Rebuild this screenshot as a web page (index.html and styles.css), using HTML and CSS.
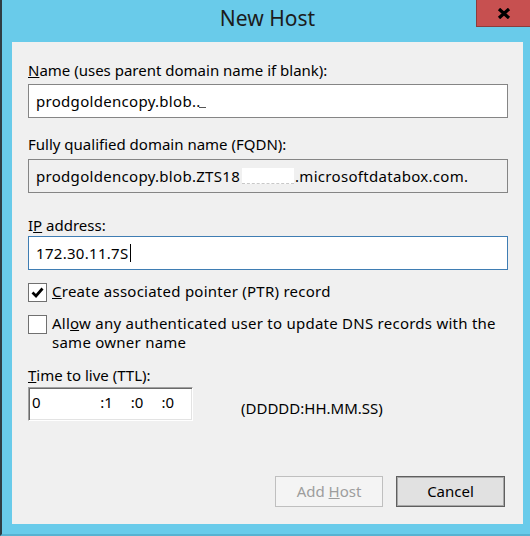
FILE: index.html
```html
<!DOCTYPE html>
<html lang="en">
<head>
    <meta charset="UTF-8">
    <title>New Host</title>
    <link rel="stylesheet" href="styles.css">
</head>
<body>

    <div class="window">
        <div class="titlebar">
            <span class="title">New Host</span>
            <div class="close">
                <svg width="14" height="11" viewBox="0 0 14 11">
                    <path d="M2 1 L12 10 M12 1 L2 10" stroke="#000" stroke-width="3.3" fill="none"/>
                </svg>
            </div>
        </div>

        <div class="client">
            <div class="caption"><u>N</u>ame (uses parent domain name if blank):</div>
            <div class="textbox"><span>prodgoldencopy.blob..</span><span class="mark"></span></div>

            <div class="caption group">Fully qualified domain name (FQDN):</div>
            <div class="textbox readonly"><span>prodgoldencopy.blob.ZTS18</span><span class="redacted"></span><span>.microsoftdatabox.com.</span></div>

            <div class="caption group ip">I<u>P</u> address:</div>
            <div class="textbox focused"><span>172.30.11.7S</span><span class="caret"></span></div>

            <div class="check-row first">
                <div class="checkbox">
                    <svg width="17" height="17" viewBox="0 0 17 17">
                        <path d="M3.5 8.5 L7 12 L13.5 4.5" stroke="#000" stroke-width="2.7" fill="none"/>
                    </svg>
                </div>
                <div class="check-text"><u>C</u>reate associated pointer (PTR) record</div>
            </div>

            <div class="check-row">
                <div class="checkbox"></div>
                <div class="check-text">All<u>o</u>w any authenticated user to update DNS records with the<br>same owner name</div>
            </div>

            <div class="caption ttl-caption"><u>T</u>ime to live (TTL):</div>
            <div class="ttl-row">
                <div class="ttl-box">
                    <span class="ttl-days">0</span>
                    <span class="ttl-part">:1</span>
                    <span class="ttl-part">:0</span>
                    <span class="ttl-part">:0</span>
                </div>
                <div class="ttl-format">(DDDDD:HH.MM.SS)</div>
            </div>

            <div class="buttons">
                <div class="button disabled"><span>Add <u>H</u>ost</span></div>
                <div class="button default"><span>Cancel</span></div>
            </div>
        </div>
    </div>

</body>
</html>
```

FILE: styles.css
```css
html, body {
    margin: 0;
    padding: 0;
}

body {
    width: 530px;
    height: 536px;
    overflow: hidden;
    font-family: "Noto Sans", "Open Sans", sans-serif;
    font-size: 15px;
    line-height: 19px;
    color: #000;
}

.window {
    box-sizing: border-box;
    height: 536px;
    background-color: #69cbea;
    border-left: 2px solid #2f3d44;
    border-bottom: 2px solid #58b2d1;
    padding: 0 7px 10px 10px;
    display: flex;
    flex-direction: column;
}

.titlebar {
    height: 42px;
    position: relative;
    display: flex;
    align-items: center;
    justify-content: center;
}

.title {
    font-size: 21px;
    color: #1c1c1c;
    margin-top: -5px;
}

.close {
    position: absolute;
    top: 0;
    right: -7px;
    box-sizing: border-box;
    width: 54px;
    height: 27px;
    background-color: #c75050;
    border-left: 1px solid #8c3c3c;
    border-bottom: 1px solid #8c3c3c;
    display: flex;
    align-items: center;
    justify-content: center;
}

.client {
    flex: 1;
    background-color: #f0f0f0;
    padding: 19px 15px 17px 16px;
    display: flex;
    flex-direction: column;
}

.caption {
    margin-bottom: 4px;
}

.group {
    margin-top: 17px;
    margin-bottom: 5px;
}

.ip {
    margin-top: 23px;
    margin-bottom: 1px;
}

.textbox {
    box-sizing: border-box;
    height: 34px;
    border: 1px solid #858585;
    background-color: #fff;
    padding: 0 7px;
    display: flex;
    align-items: center;
    white-space: nowrap;
    letter-spacing: 0.3px;
}

.textbox.readonly {
    background-color: #f0f0f0;
}

.textbox.focused {
    border-color: #3f7db3;
}

.mark {
    display: inline-block;
    width: 7px;
    height: 13px;
    border-bottom: 1px solid #555;
    margin-left: -2px;
}

.redacted {
    display: inline-block;
    width: 52px;
    height: 15px;
    background-color: #fff;
    border-bottom: 1px dashed #c8c8c8;
    margin: 0 1px 0 2px;
}

.caret {
    display: inline-block;
    width: 1px;
    height: 18px;
    background-color: #000;
    margin-left: 1px;
}

.check-row {
    display: flex;
    align-items: flex-start;
    margin-top: 13px;
}

.checkbox {
    box-sizing: border-box;
    width: 19px;
    height: 19px;
    border: 1px solid #707070;
    background-color: #fff;
    flex-shrink: 0;
    display: flex;
    align-items: center;
    justify-content: center;
}

.check-text {
    margin-left: 5px;
    margin-top: -1px;
    letter-spacing: 0.25px;
}

.ttl-caption {
    margin-top: 14px;
    margin-bottom: 2px;
}

.ttl-row {
    display: flex;
}

.ttl-box {
    box-sizing: border-box;
    width: 165px;
    height: 34px;
    background-color: #fff;
    border-top: 1px solid #a0a0a0;
    border-left: 1px solid #a0a0a0;
    border-right: 1px solid #ffffff;
    border-bottom: 1px solid #ffffff;
    box-shadow: inset 1px 1px 0 #6a6a6a, inset -1px -1px 0 #e3e3e3;
    display: flex;
    align-items: center;
    padding-left: 3px;
    padding-bottom: 3px;
}

.ttl-days {
    width: 69px;
}

.ttl-part {
    width: 31px;
}

.ttl-format {
    align-self: flex-end;
    margin-left: 48px;
    margin-bottom: 3px;
}

.buttons {
    margin-top: auto;
    display: flex;
    justify-content: flex-end;
    gap: 13px;
    padding-right: 3px;
}

.button {
    box-sizing: border-box;
    width: 108px;
    height: 31px;
    display: flex;
    align-items: center;
    justify-content: center;
}

.button.disabled {
    background-color: #f4f4f4;
    border: 1px solid #bfbfbf;
    color: #9d9d9d;
}

.button.default {
    width: 109px;
    background-color: #e1e1e1;
    border: 1px solid #5f5f5f;
    box-shadow: inset 0 0 0 1px #a8a8a8;
}
```
